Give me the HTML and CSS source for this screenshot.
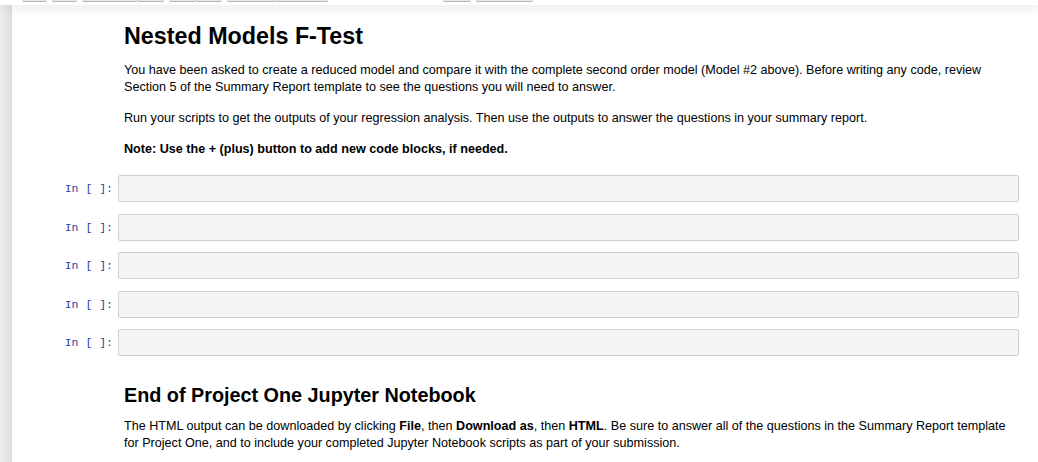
FILE: index.html
```html
<!DOCTYPE html>
<html>
<head>
<meta charset="utf-8">
<link rel="stylesheet" href="styles.css">
</head>
<body>
<header class="toolbar">
  <div class="btn w25"></div>
  <div class="btn w25"></div>
  <div class="group"><div class="btn w55"></div><div class="btn w27"></div></div>
  <div class="group"><div class="btn w27"></div><div class="btn w26"></div></div>
  <div class="group"><div class="btn w48"></div><div class="btn w53"></div></div>
  <div class="spacer"></div>
  <div class="btn w28"></div>
  <div class="btn w57"></div>
</header>
<div class="site">
  <div class="notebook">
    <div class="cell text-cell first">
      <div class="prompt"></div>
      <div class="rendered">
        <h2>Nested Models F-Test</h2>
        <p>You have been asked to create a reduced model and compare it with the complete second order model (Model #2 above). Before writing any code, review Section 5 of the Summary Report template to see the questions you will need to answer.</p>
        <p>Run your scripts to get the outputs of your regression analysis. Then use the outputs to answer the questions in your summary report.</p>
        <p><strong>Note: Use the + (plus) button to add new code blocks, if needed.</strong></p>
      </div>
    </div>
    <div class="cell code-cell"><div class="prompt">In&nbsp;[&nbsp;]:</div><div class="input-area"></div></div>
    <div class="cell code-cell"><div class="prompt">In&nbsp;[&nbsp;]:</div><div class="input-area"></div></div>
    <div class="cell code-cell"><div class="prompt">In&nbsp;[&nbsp;]:</div><div class="input-area"></div></div>
    <div class="cell code-cell"><div class="prompt">In&nbsp;[&nbsp;]:</div><div class="input-area"></div></div>
    <div class="cell code-cell"><div class="prompt">In&nbsp;[&nbsp;]:</div><div class="input-area"></div></div>
    <div class="cell text-cell last">
      <div class="prompt"></div>
      <div class="rendered">
        <h3>End of Project One Jupyter Notebook</h3>
        <p>The HTML output can be downloaded by clicking <strong>File</strong>, then <strong>Download as</strong>, then <strong>HTML</strong>. Be sure to answer all of the questions in the Summary Report template for Project One, and to include your completed Jupyter Notebook scripts as part of your submission.</p>
      </div>
    </div>
  </div>
</div>
</body>
</html>
```
FILE: styles.css
```css
html, body {
  margin: 0;
  padding: 0;
  height: 100%;
  overflow: hidden;
}
body {
  background: #eeeeee;
  font-family: "Liberation Sans", Arial, sans-serif;
  color: #000;
}
.toolbar {
  position: relative;
  z-index: 2;
  height: 5px;
  background: #fff;
  display: flex;
  align-items: flex-end;
  gap: 5px;
  padding: 0 0 3px 22px;
  box-sizing: border-box;
  box-shadow: 0 0 12px 1px rgba(87, 87, 87, 0.2);
}
.group { display: flex; }
.btn {
  height: 2px;
  background: #e8e8e8;
  border-bottom: 1px solid #b8b8b8;
  border-radius: 0 0 2px 2px;
  box-sizing: border-box;
}
.group .btn + .btn { border-left: 1px solid #c8c8c8; }
.spacer { width: 105px; }
.w25 { width: 25px; }
.w26 { width: 26px; }
.w27 { width: 27px; }
.w28 { width: 28px; }
.w48 { width: 48px; }
.w53 { width: 53px; }
.w55 { width: 55px; }
.w57 { width: 57px; }
.site {
  padding-left: 12px;
  height: 100%;
}
.notebook {
  background: #fff;
  height: 100%;
  box-shadow: 0 0 12px 1px rgba(87, 87, 87, 0.2);
  padding: 0 14px 0 0;
}
.cell {
  display: flex;
  padding: 5px;
}
.prompt {
  width: 101px;
  flex: none;
  box-sizing: border-box;
  padding-right: 5px;
  text-align: right;
  font-family: "Liberation Mono", "DejaVu Sans Mono", monospace;
  font-size: 11.5px;
  color: #303f9f;
  line-height: 27px;
}
.input-area {
  flex: 1;
  height: 27px;
  background: #f5f5f5;
  border: 1px solid #cfcfcf;
  border-radius: 2px;
  box-sizing: border-box;
}
.code-cell {
  padding-top: 5px;
  padding-bottom: 6.5px;
}
.rendered {
  flex: 1;
  padding-left: 6px;
  font-size: 12.6px;
  line-height: 17px;
}
.rendered h2 {
  font-size: 23.3px;
  font-weight: bold;
  margin: 0 0 11.5px 0;
  line-height: 28px;
}
.rendered h3 {
  font-size: 19.8px;
  font-weight: bold;
  margin: 0 0 11px 0;
  line-height: 24px;
}
.rendered p {
  margin: 0 0 14px 0;
}
.rendered p:last-child { margin-bottom: 0; }
.first { padding-top: 17px; padding-bottom: 12.5px; }
.last { padding-top: 20.5px; }
```
